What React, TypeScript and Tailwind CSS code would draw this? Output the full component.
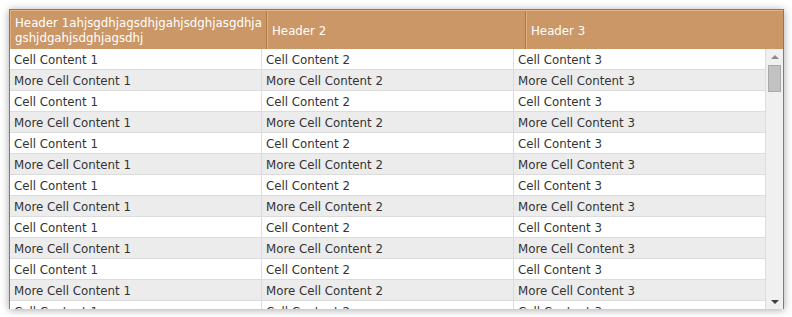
import React from 'react';

const rows = Array.from({ length: 13 }, (_, i) => i % 2 === 0 ? 'Cell Content' : 'More Cell Content');

function HeaderCell({ text, w, last }: { text: string; w: string; last?: boolean }) {
  return (
    <div
      className={`${w} flex items-center px-[4px] pt-[2px] leading-[15px] text-white border-l border-[#e2ae7e] ${last ? '' : 'border-r border-r-[#b47a46]'}`}
    >
      <span className="break-all">{text}</span>
    </div>
  );
}

function ScrollBar() {
  return (
    <div className="w-[17px] shrink-0 bg-[#f0f0f0] flex flex-col items-center pt-[6px] pb-[5px]">
      <div className="w-0 h-0 border-l-[4px] border-r-[4px] border-b-[4px] border-l-transparent border-r-transparent border-b-[#8a8a8a]" />
      <div className="mt-[6px] w-[13px] h-[27px] bg-[#c2c2c2] border border-[#a9a9a9]" />
      <div className="flex-1" />
      <div className="w-0 h-0 border-l-[4px] border-r-[4px] border-t-[4px] border-l-transparent border-r-transparent border-t-[#3c3c3c]" />
    </div>
  );
}

export default function App() {
  return (
    <div className="p-[9px] bg-white" style={{ fontFamily: '"DejaVu Sans", sans-serif' }}>
      <div className="w-[775px] h-[300px] flex flex-col border-l border-r border-t border-[#a8713f] shadow-[0_1px_8px_rgba(0,0,0,0.35)] text-[11.8px] text-[#333]">
        {/* header */}
        <div className="h-[39px] flex shrink-0 bg-[#cb9767] border-t border-[#e6b384]">
          <HeaderCell w="w-[257px]" text="Header 1ahjsgdhjagsdhjgahjsdghjasgdhjagshjdgahjsdghjagsdhj" />
          <HeaderCell w="w-[259px]" text="Header 2" />
          <HeaderCell w="flex-1" text="Header 3" last />
        </div>
        {/* body */}
        <div className="flex flex-1 min-h-0 overflow-hidden">
          <div className="flex-1 overflow-hidden">
            {rows.map((r, i) => (
              <div
                key={i}
                className={`h-[21px] flex border-b border-[#dcdcdc] ${i % 2 === 0 ? 'bg-white' : 'bg-[#ececec]'}`}
              >
                {[1, 2, 3].map(c => (
                  <div key={c} className="w-[252px] border-r border-[#dcdcdc] px-[4px] pt-[3px] flex items-center whitespace-nowrap">
                    {r} {c}
                  </div>
                ))}
              </div>
            ))}
          </div>
          <ScrollBar />
        </div>
      </div>
    </div>
  );
}
